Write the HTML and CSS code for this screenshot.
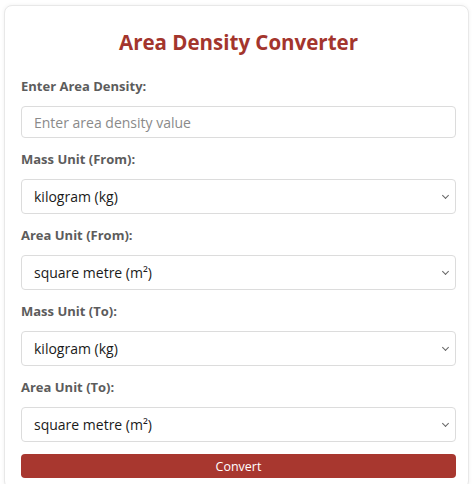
FILE: index.html
```html
<!DOCTYPE html>
<html lang="en">
<head>
    <meta charset="UTF-8">
    <meta name="viewport" content="width=device-width, initial-scale=1.0">
    <title>Area Density Converter</title>
    <link rel="stylesheet" href="styles.css">
</head>
<body>
    <div class="converter">
        <h1>Area Density Converter</h1>

        <label for="value">Enter Area Density:</label>
        <input type="number" id="value" placeholder="Enter area density value">

        <label for="massFrom">Mass Unit (From):</label>
        <div class="select-wrap">
            <select id="massFrom">
                <option>kilogram (kg)</option>
                <option>gram (g)</option>
                <option>pound (lb)</option>
            </select>
        </div>

        <label for="areaFrom">Area Unit (From):</label>
        <div class="select-wrap">
            <select id="areaFrom">
                <option>square metre (m²)</option>
                <option>square foot (ft²)</option>
            </select>
        </div>

        <label for="massTo">Mass Unit (To):</label>
        <div class="select-wrap">
            <select id="massTo">
                <option>kilogram (kg)</option>
                <option>gram (g)</option>
                <option>pound (lb)</option>
            </select>
        </div>

        <label for="areaTo">Area Unit (To):</label>
        <div class="select-wrap">
            <select id="areaTo">
                <option>square metre (m²)</option>
                <option>square foot (ft²)</option>
            </select>
        </div>

        <button class="convert-btn">Convert</button>
    </div>
</body>
</html>
```

FILE: styles.css
```css
body {
    font-family: "Open Sans", Arial, sans-serif;
    margin: 0;
    padding: 5px 5px 0 4px;
    background: #fff;
}
.converter {
    background: #fff;
    border: 1px solid #e8e8e8;
    border-radius: 8px;
    box-shadow: 0 0 4px rgba(0, 0, 0, 0.06);
    padding: 20px 12px 10px 16px;
}
h1 {
    margin: 0 0 19px;
    font-size: 20.5px;
    line-height: 32px;
    text-align: center;
    color: #a3352d;
}
label {
    display: block;
    font-size: 13px;
    font-weight: bold;
    line-height: 18px;
    color: #5c5c5c;
    margin-bottom: 11px;
}
input, select {
    display: block;
    width: 100%;
    box-sizing: border-box;
    font-family: inherit;
    font-size: 14px;
    color: #1a1a1a;
    background: #fff;
    border: 1px solid #dcdcdc;
    border-radius: 4px;
    margin: 0;
}
input {
    height: 32px;
    padding: 0 12px;
    margin-bottom: 12px;
}
input::placeholder {
    color: #8a8a8a;
}
.select-wrap {
    position: relative;
    margin-bottom: 12px;
}
select {
    height: 35px;
    padding: 0 28px 0 12px;
    appearance: none;
    -webkit-appearance: none;
}
/* small grey chevron like the native arrow */
.select-wrap::after {
    content: "";
    position: absolute;
    right: 8px;
    top: 14px;
    width: 4px;
    height: 4px;
    border-right: 1.3px solid #666;
    border-bottom: 1.3px solid #666;
    transform: rotate(45deg);
    pointer-events: none;
}
.convert-btn {
    display: block;
    width: 100%;
    height: 24px;
    margin-top: 10px;
    border: none;
    border-radius: 4px;
    background: #a8372f;
    color: #fff;
    font-family: inherit;
    font-size: 12.5px;
    font-weight: 500;
}
```
